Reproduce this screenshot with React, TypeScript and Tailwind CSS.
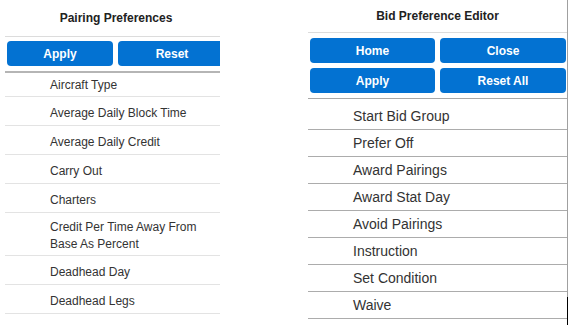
import React from 'react';

const pairingItems: string[] = [
  'Average Daily Block Time',
  'Average Daily Credit',
  'Carry Out',
  'Charters',
  'Credit Per Time Away From Base As Percent',
  'Deadhead Day',
  'Deadhead Legs',
];

const bidItems: string[] = [
  'Start Bid Group',
  'Prefer Off',
  'Award Pairings',
  'Award Stat Day',
  'Avoid Pairings',
  'Instruction',
  'Set Condition',
  'Waive',
];

const btn =
  'h-[25px] rounded-[4px] bg-[#0372d2] text-white text-[12px] font-bold flex items-center justify-center shrink-0';

function PairingPanel() {
  return (
    <div className="ml-[5px] w-[215px] overflow-hidden">
      <div className="h-[37px] border-b border-[#dcdcdc] flex items-center justify-center pl-[7px] text-[12px] font-bold text-[#222]">
        Pairing Preferences
      </div>
      <div className="flex gap-[5px] pl-[2px] pt-[4px] pb-[5px] border-b-2 border-[#b5b5b5]">
        <button className={`${btn} w-[106px]`}>Apply</button>
        <button className={`${btn} w-[108px]`}>Reset</button>
      </div>
      <div className="h-[24px] flex items-center pl-[45px] border-b border-[#e3e3e3] text-[12px] text-[#333]">
        Aircraft Type
      </div>
      {pairingItems.map((item) => (
        <div
          key={item}
          className="min-h-[29px] flex items-center pt-[6px] pb-[2px] pl-[45px] pr-[10px] border-b border-[#e3e3e3] text-[12px] leading-[17px] text-[#333]"
        >
          {item}
        </div>
      ))}
    </div>
  );
}

function BidPanel() {
  return (
    <div className="relative ml-[88px] w-[260px] h-[325px] border-r border-[#a0a0a0]">
      <div className="h-[33px] border-b border-[#dcdcdc] flex items-center justify-center text-[12px] font-bold text-[#222]">
        Bid Preference Editor
      </div>
      <div className="grid grid-cols-[125px_126px] gap-[5px] pl-[2px] pt-[5px] pb-[5px] border-b border-[#a8a8a8]">
        <button className={btn}>Home</button>
        <button className={btn}>Close</button>
        <button className={btn}>Apply</button>
        <button className={btn}>Reset All</button>
      </div>
      <div className="mt-[4px]">
        {bidItems.map((item) => (
          <div
            key={item}
            className="h-[27px] flex items-center pl-[45px] border-b border-[#acacac] text-[14px] text-[#333]"
          >
            {item}
          </div>
        ))}
      </div>
      <div className="absolute right-[-1px] top-[297px] bottom-0 w-px bg-black" />
    </div>
  );
}

export default function App() {
  return (
    <div
      className="w-[569px] h-[325px] overflow-hidden bg-white flex"
      style={{ fontFamily: '"Liberation Sans", Arial, sans-serif' }}
    >
      <PairingPanel />
      <BidPanel />
    </div>
  );
}
